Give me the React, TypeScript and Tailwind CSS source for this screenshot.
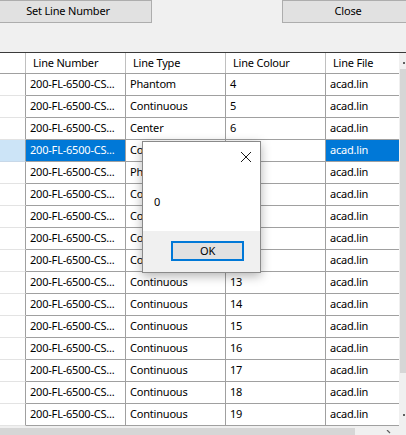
import React from "react";

const rows: { type: string; colour: string; sel?: boolean }[] = [
  { type: "Phantom", colour: "4" },
  { type: "Continuous", colour: "5" },
  { type: "Center", colour: "6" },
  { type: "Continuous", colour: "7", sel: true },
  { type: "Phantom", colour: "8" },
  { type: "Continuous", colour: "9" },
  { type: "Continuous", colour: "10" },
  { type: "Continuous", colour: "11" },
  { type: "Continuous", colour: "12" },
  { type: "Continuous", colour: "13" },
  { type: "Continuous", colour: "14" },
  { type: "Continuous", colour: "15" },
  { type: "Continuous", colour: "16" },
  { type: "Continuous", colour: "17" },
  { type: "Continuous", colour: "18" },
  { type: "Continuous", colour: "19" },
];

export default function App() {
  return (
    <div
      className="relative w-[406px] h-[435px] overflow-hidden bg-[#f0f0f0] flex flex-col text-[11px] tracking-[-0.2px] text-black"
      style={{ fontFamily: '"Noto Sans", "Open Sans", sans-serif' }}
    >
      {/* top buttons */}
      <div className="h-[23px] flex justify-between shrink-0">
        <div className="ml-[-16px] w-[168px] h-[23px] bg-[#e1e1e1] border border-[#adadad] flex items-center justify-center">
          Set Line Number
        </div>
        <div className="mr-[-8px] w-[132px] h-[23px] bg-[#e1e1e1] border border-[#adadad] flex items-center justify-center">
          Close
        </div>
      </div>
      <div className="h-[29px] shrink-0" />
      {/* grid */}
      <div className="border-t border-[#3a3a3a] flex h-[374px] shrink-0">
        <div className="w-[399px] bg-white overflow-hidden">
          <div className="grid grid-cols-[26px_100px_100px_100px_73px] h-[21px] border-b border-[#a0a0a0]">
            <div className="border-r border-[#c0c0c0]" />
            <div className="border-r border-[#c0c0c0] pl-[7px] flex items-center">Line Number</div>
            <div className="border-r border-[#c0c0c0] pl-[7px] flex items-center">Line Type</div>
            <div className="border-r border-[#c0c0c0] pl-[7px] flex items-center">Line Colour</div>
            <div className="pl-[7px] flex items-center">Line File</div>
          </div>
          {rows.map((r, i) => (
            <div key={i} className="grid grid-cols-[26px_100px_100px_100px_73px] h-[22px]">
              <div
                className={`border-r border-[#a0a0a0] border-b ${
                  r.sel ? "bg-[#cce4f7] border-b-[#c8d8e8]" : "border-b-[#e3e3e3]"
                }`}
              />
              <div
                className={`border-r border-b border-[#a0a0a0] pl-[4px] flex items-center whitespace-nowrap overflow-hidden ${
                  r.sel ? "bg-[#0078d7] text-white" : ""
                }`}
              >
                200-FL-6500-CS...
              </div>
              <div className="border-r border-b border-[#a0a0a0] pl-[4px] flex items-center">{r.type}</div>
              <div className="border-r border-b border-[#a0a0a0] pl-[4px] flex items-center">{r.colour}</div>
              <div
                className={`border-b border-[#a0a0a0] pl-[4px] flex items-center ${
                  r.sel ? "bg-[#0078d7] text-white" : ""
                }`}
              >
                acad.lin
              </div>
            </div>
          ))}
        </div>
        {/* vertical scrollbar */}
        <div className="w-[7px] bg-[#f0f0f0] flex flex-col">
          <div className="h-[16px] relative">
            <div className="absolute left-[4px] top-[9px] w-[2px] h-[2px] bg-[#606060]" />
          </div>
          <div className="ml-[1px] h-[304px] bg-[#d6d6d6]" />
          <div className="flex-1 relative">
            <div className="absolute left-[4px] top-[41px] w-[2px] h-[2px] bg-[#606060]" />
          </div>
        </div>
      </div>
      {/* horizontal scrollbar */}
      <div className="h-[9px] bg-[#f0f0f0] relative shrink-0">
        <div className="absolute left-0 top-[2px] w-[355px] h-[7px] bg-[#d6d6d6]" />
        <svg className="absolute left-[386px] top-[4px]" width="8" height="6" viewBox="0 0 8 6">
          <path d="M1 0 L4 3" stroke="#606060" strokeWidth="1.2" fill="none" />
        </svg>
      </div>

      {/* message box */}
      <div className="absolute left-[142px] top-[141px] w-[119px] h-[132px] border border-[#8a8a8a] bg-white shadow-[0_3px_10px_rgba(0,0,0,0.3)] flex flex-col">
        <div className="h-[89px] relative">
          <svg className="absolute left-[97px] top-[9px]" width="12" height="12" viewBox="0 0 12 12">
            <path d="M1 1 L11 11 M11 1 L1 11" stroke="#1a1a1a" strokeWidth="1" fill="none" />
          </svg>
          <div className="absolute left-[11px] top-[52px] leading-[16px]">0</div>
        </div>
        <div className="flex-1 bg-[#f0f0f0] pt-[10px] pl-[28px]">
          <div className="w-[73px] h-[20px] bg-[#e1e1e1] border-2 border-[#0078d7] flex items-center justify-center">
            OK
          </div>
        </div>
      </div>
    </div>
  );
}
